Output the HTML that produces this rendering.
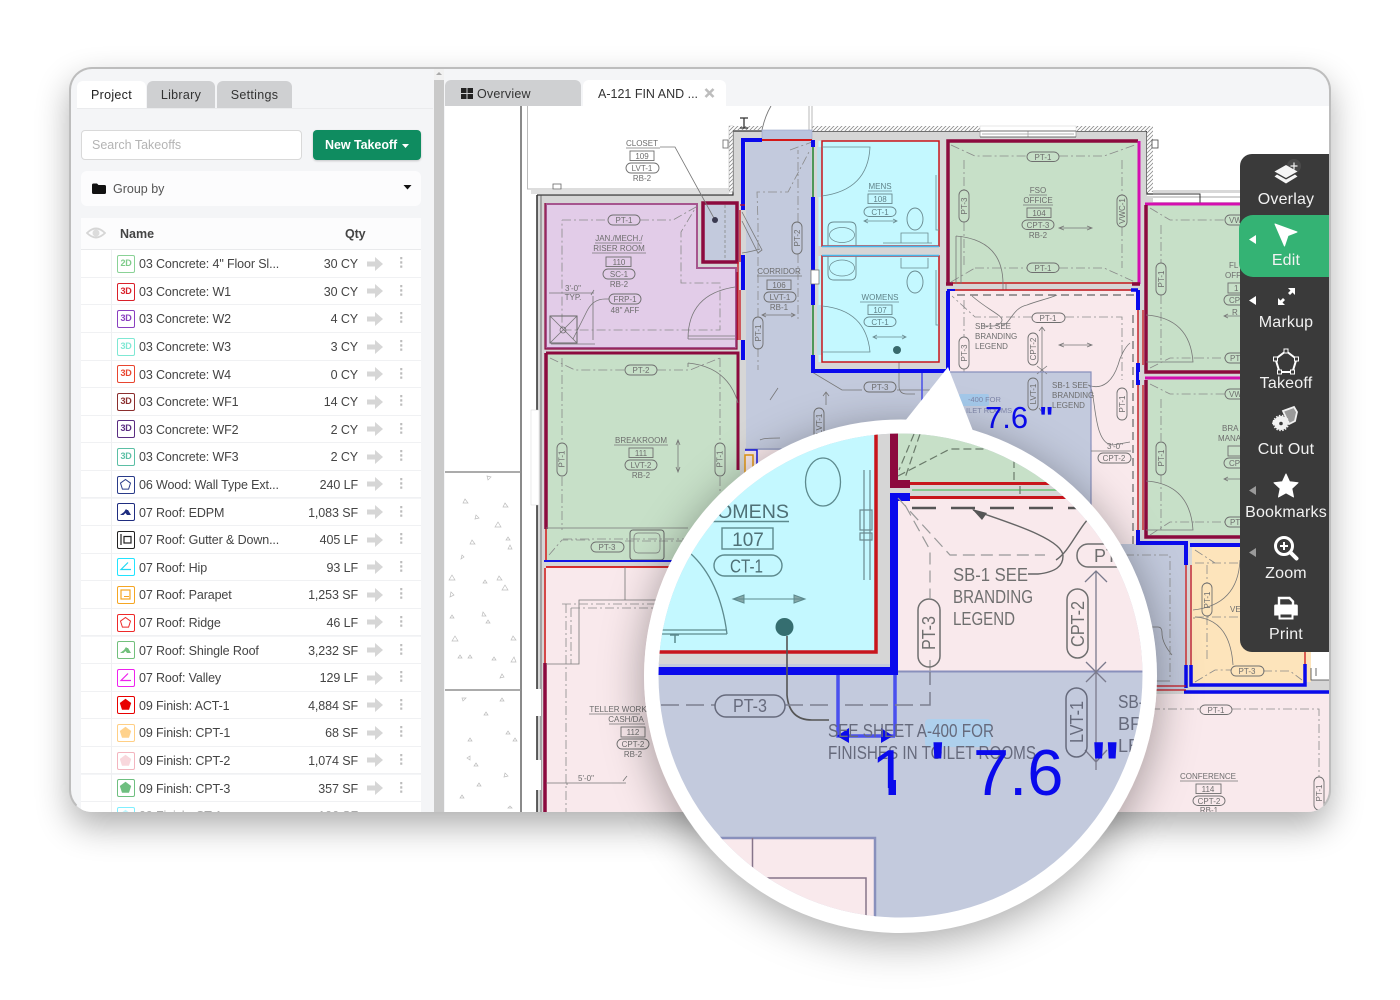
<!DOCTYPE html>
<html lang="en"><head><meta charset="utf-8"><title>Takeoff</title>
<style>
html,body{margin:0;padding:0;background:#fff;width:1400px;height:1000px;overflow:hidden}
*{box-sizing:border-box}
body{font-family:"Liberation Sans",sans-serif;position:relative}
.a{position:absolute}
#win{position:absolute;left:70px;top:68px;width:1260px;height:744px;border-radius:22px;overflow:hidden;background:#f4f5f7;box-shadow:0 14px 34px rgba(0,0,0,.32)}
#p{position:absolute;left:-70px;top:-68px;width:1400px;height:1000px}
#edge{position:absolute;left:69px;top:67px;width:1262px;height:746px;border-radius:23px;border:2px solid #bdbdbd;border-bottom-color:transparent;pointer-events:none}
.tab{position:absolute;border-radius:6px 6px 0 0;background:#cfd0d2;font-size:12.5px;color:#333;text-align:center;line-height:28px;height:27px;letter-spacing:.3px}
.r{position:absolute;left:81px;width:340px;height:27.6px;background:#fff;border-bottom:1px solid #f0f1f3;font-size:12.5px;color:#444}
.b{position:absolute;left:36px;top:4.8px;width:18px;height:18px;border:1.5px solid;border-radius:2px;font-size:9px;font-weight:bold;text-align:center;line-height:15px;letter-spacing:-.2px}
.b svg{position:absolute;left:0;top:0}
.n{position:absolute;left:58px;top:0;line-height:28.6px;white-space:nowrap;letter-spacing:-.12px}
.q{position:absolute;right:63px;top:0;line-height:28.6px;white-space:nowrap;letter-spacing:-.1px}
.ar{position:absolute;left:286px;top:6.5px}
.k{position:absolute;left:319px;top:7px}
svg text{font-family:"Liberation Sans",sans-serif}
.t{font-size:8px;fill:#6d6d6d;text-anchor:middle}
.s{fill:none;stroke:#777;stroke-width:.8}
.d{fill:none;stroke:#8a8a8a;stroke-width:.8;stroke-dasharray:9 3 2 3}
.pl{fill:none;stroke:#6f6f6f;stroke-width:.9}
.tl{position:absolute;left:1241px;width:90px;text-align:center;color:#f2f2f2;font-size:16px;line-height:18px;letter-spacing:.2px}
</style></head><body>
<div id="win"><div id="p">

<!-- left panel -->
<div class="a" style="left:70px;top:68px;width:364px;height:744px;background:#f4f5f7"></div>
<div class="tab" style="left:77px;top:81px;width:69px;background:#fff;color:#222">Project</div>
<div class="tab" style="left:147px;top:81px;width:68px">Library</div>
<div class="tab" style="left:217px;top:81px;width:75px">Settings</div>
<div class="a" style="left:77px;top:108px;width:356px;height:1px;background:#eaebed"></div>
<div class="a" style="left:81px;top:130px;width:221px;height:30px;background:#fff;border:1px solid #d9d9d9;border-radius:4px;font-size:12.5px;color:#b4b4b4;line-height:28px;padding-left:10px">Search Takeoffs</div>
<div class="a" style="left:313px;top:130px;width:108px;height:30px;background:#0f8c60;border-radius:4px;color:#fff;font-size:12.5px;font-weight:bold;line-height:30px;padding-left:12px;box-shadow:0 1px 2px rgba(0,0,0,.2);letter-spacing:-.05px">New Takeoff</div>
<svg class="a" style="left:401px;top:143px" width="9" height="6"><path d="M1 1h7L4.500 5z" fill="#fff"/></svg>
<div class="a" style="left:81px;top:171px;width:340px;height:35px;background:#fcfcfd;border-radius:6px;font-size:12.5px;color:#555;line-height:36px;padding-left:32px">Group by</div>
<svg class="a" style="left:92px;top:183px" width="14" height="11"><path d="M0 2q0-1.500 1.500-1.500h3.500l1.500 1.500h6q1.500 0 1.500 1.500v6q0 1.500-1.500 1.500h-11q-1.500 0-1.500-1.500z" fill="#111"/></svg>
<svg class="a" style="left:403px;top:184px" width="10" height="7"><path d="M.5 1h8L4.500 5.500z" fill="#111"/></svg>
<div class="a" style="left:81px;top:218px;width:340px;height:32px;background:#fcfcfd;border-bottom:1px solid #e9eaec"></div>
<svg class="a" style="left:86px;top:226px" width="20" height="14"><path d="M1 7q9-9 18 0q-9 9-18 0z" fill="none" stroke="#d6d6d6" stroke-width="1.800"/><circle cx="10" cy="7" r="3.500" fill="#dcdcdc"/></svg>
<div class="a" style="left:120px;top:226px;font-size:12.5px;font-weight:bold;color:#444;line-height:16px">Name</div>
<div class="a" style="left:345px;top:226px;font-size:12.5px;font-weight:bold;color:#444;line-height:16px;letter-spacing:-.1px">Qty</div>

<div class="r" style="top:250.200px"><div class="b" style="color:#7ecb8a;border-color:#8ad296">2D</div><div class="n">03 Concrete: 4" Floor Sl...</div><div class="q">30 CY</div><svg class="ar" width="17" height="14"><path d="M0 4.500h8V0l8 7-8 7V9.500H0z" fill="#d6d6d6"/></svg><svg class="k" width="3" height="11"><path d="M.2 0h2.100v2.300H.2zM.2 4.300h2.100v2.300H.2zM.2 8.500h2.100v2.300H.2z" fill="#bcbcbc"/></svg></div>
<div class="r" style="top:277.800px"><div class="b" style="color:#d9202a;border-color:#d9202a">3D</div><div class="n">03 Concrete: W1</div><div class="q">30 CY</div><svg class="ar" width="17" height="14"><path d="M0 4.500h8V0l8 7-8 7V9.500H0z" fill="#d6d6d6"/></svg><svg class="k" width="3" height="11"><path d="M.2 0h2.100v2.300H.2zM.2 4.300h2.100v2.300H.2zM.2 8.500h2.100v2.300H.2z" fill="#bcbcbc"/></svg></div>
<div class="r" style="top:305.400px"><div class="b" style="color:#8a3fc0;border-color:#8a3fc0">3D</div><div class="n">03 Concrete: W2</div><div class="q">4 CY</div><svg class="ar" width="17" height="14"><path d="M0 4.500h8V0l8 7-8 7V9.500H0z" fill="#d6d6d6"/></svg><svg class="k" width="3" height="11"><path d="M.2 0h2.100v2.300H.2zM.2 4.300h2.100v2.300H.2zM.2 8.500h2.100v2.300H.2z" fill="#bcbcbc"/></svg></div>
<div class="r" style="top:333px"><div class="b" style="color:#7fe8d4;border-color:#7fe8d4">3D</div><div class="n">03 Concrete: W3</div><div class="q">3 CY</div><svg class="ar" width="17" height="14"><path d="M0 4.500h8V0l8 7-8 7V9.500H0z" fill="#d6d6d6"/></svg><svg class="k" width="3" height="11"><path d="M.2 0h2.100v2.300H.2zM.2 4.300h2.100v2.300H.2zM.2 8.500h2.100v2.300H.2z" fill="#bcbcbc"/></svg></div>
<div class="r" style="top:360.500px"><div class="b" style="color:#e8452f;border-color:#e8452f">3D</div><div class="n">03 Concrete: W4</div><div class="q">0 CY</div><svg class="ar" width="17" height="14"><path d="M0 4.500h8V0l8 7-8 7V9.500H0z" fill="#d6d6d6"/></svg><svg class="k" width="3" height="11"><path d="M.2 0h2.100v2.300H.2zM.2 4.300h2.100v2.300H.2zM.2 8.500h2.100v2.300H.2z" fill="#bcbcbc"/></svg></div>
<div class="r" style="top:388.100px"><div class="b" style="color:#8b2e2e;border-color:#8b2e2e">3D</div><div class="n">03 Concrete: WF1</div><div class="q">14 CY</div><svg class="ar" width="17" height="14"><path d="M0 4.500h8V0l8 7-8 7V9.500H0z" fill="#d6d6d6"/></svg><svg class="k" width="3" height="11"><path d="M.2 0h2.100v2.300H.2zM.2 4.300h2.100v2.300H.2zM.2 8.500h2.100v2.300H.2z" fill="#bcbcbc"/></svg></div>
<div class="r" style="top:415.700px"><div class="b" style="color:#5a2d82;border-color:#5a2d82">3D</div><div class="n">03 Concrete: WF2</div><div class="q">2 CY</div><svg class="ar" width="17" height="14"><path d="M0 4.500h8V0l8 7-8 7V9.500H0z" fill="#d6d6d6"/></svg><svg class="k" width="3" height="11"><path d="M.2 0h2.100v2.300H.2zM.2 4.300h2.100v2.300H.2zM.2 8.500h2.100v2.300H.2z" fill="#bcbcbc"/></svg></div>
<div class="r" style="top:443.300px"><div class="b" style="color:#5bbfa5;border-color:#5bbfa5">3D</div><div class="n">03 Concrete: WF3</div><div class="q">2 CY</div><svg class="ar" width="17" height="14"><path d="M0 4.500h8V0l8 7-8 7V9.500H0z" fill="#d6d6d6"/></svg><svg class="k" width="3" height="11"><path d="M.2 0h2.100v2.300H.2zM.2 4.300h2.100v2.300H.2zM.2 8.500h2.100v2.300H.2z" fill="#bcbcbc"/></svg></div>
<div class="r" style="top:470.900px"><div class="b" style="border-color:#2a3c8a"><svg width="15" height="15"><path d="M7.500 2.500l5 3.600-1.900 6H4.400l-1.900-6z" fill="none" stroke="#2a3c8a" stroke-width="1"/></svg></div><div class="n">06 Wood: Wall Type Ext...</div><div class="q">240 LF</div><svg class="ar" width="17" height="14"><path d="M0 4.500h8V0l8 7-8 7V9.500H0z" fill="#d6d6d6"/></svg><svg class="k" width="3" height="11"><path d="M.2 0h2.100v2.300H.2zM.2 4.300h2.100v2.300H.2zM.2 8.500h2.100v2.300H.2z" fill="#bcbcbc"/></svg></div>
<div class="r" style="top:498.500px"><div class="b" style="border-color:#1f2d80"><svg width="15" height="15"><path d="M2 11l4-3 2-3 1 1 1 0 3 5H9L7.500 9 5.500 11z" fill="#1f2d80"/></svg></div><div class="n">07 Roof: EDPM</div><div class="q">1,083 SF</div><svg class="ar" width="17" height="14"><path d="M0 4.500h8V0l8 7-8 7V9.500H0z" fill="#d6d6d6"/></svg><svg class="k" width="3" height="11"><path d="M.2 0h2.100v2.300H.2zM.2 4.300h2.100v2.300H.2zM.2 8.500h2.100v2.300H.2z" fill="#bcbcbc"/></svg></div>
<div class="r" style="top:526.100px"><div class="b" style="border-color:#222"><svg width="15" height="15"><path d="M3 2v11" stroke="#222" stroke-width="1.200"/><rect x="6" y="4.500" width="7" height="6.500" fill="none" stroke="#222" stroke-width="1.200"/></svg></div><div class="n">07 Roof: Gutter &amp; Down...</div><div class="q">405 LF</div><svg class="ar" width="17" height="14"><path d="M0 4.500h8V0l8 7-8 7V9.500H0z" fill="#d6d6d6"/></svg><svg class="k" width="3" height="11"><path d="M.2 0h2.100v2.300H.2zM.2 4.300h2.100v2.300H.2zM.2 8.500h2.100v2.300H.2z" fill="#bcbcbc"/></svg></div>
<div class="r" style="top:553.700px"><div class="b" style="border-color:#22e4ff"><svg width="15" height="15"><path d="M10 3.500L3 10.500h10" fill="none" stroke="#22d8f4" stroke-width="1.200"/></svg></div><div class="n">07 Roof: Hip</div><div class="q">93 LF</div><svg class="ar" width="17" height="14"><path d="M0 4.500h8V0l8 7-8 7V9.500H0z" fill="#d6d6d6"/></svg><svg class="k" width="3" height="11"><path d="M.2 0h2.100v2.300H.2zM.2 4.300h2.100v2.300H.2zM.2 8.500h2.100v2.300H.2z" fill="#bcbcbc"/></svg></div>
<div class="r" style="top:581.300px"><div class="b" style="border-color:#f5a623"><svg width="15" height="15"><rect x="3" y="3" width="9" height="9" fill="none" stroke="#f5a623" stroke-width="1.200"/><path d="M6 9.500h5" stroke="#f5a623"/></svg></div><div class="n">07 Roof: Parapet</div><div class="q">1,253 SF</div><svg class="ar" width="17" height="14"><path d="M0 4.500h8V0l8 7-8 7V9.500H0z" fill="#d6d6d6"/></svg><svg class="k" width="3" height="11"><path d="M.2 0h2.100v2.300H.2zM.2 4.300h2.100v2.300H.2zM.2 8.500h2.100v2.300H.2z" fill="#bcbcbc"/></svg></div>
<div class="r" style="top:608.900px"><div class="b" style="border-color:#ee2a2a"><svg width="15" height="15"><path d="M7.500 2.500l5 3.600-1.900 6H4.400l-1.900-6z" fill="none" stroke="#ee2a2a" stroke-width="1"/></svg></div><div class="n">07 Roof: Ridge</div><div class="q">46 LF</div><svg class="ar" width="17" height="14"><path d="M0 4.500h8V0l8 7-8 7V9.500H0z" fill="#d6d6d6"/></svg><svg class="k" width="3" height="11"><path d="M.2 0h2.100v2.300H.2zM.2 4.300h2.100v2.300H.2zM.2 8.500h2.100v2.300H.2z" fill="#bcbcbc"/></svg></div>
<div class="r" style="top:636.500px"><div class="b" style="border-color:#72c07c"><svg width="15" height="15"><path d="M2 11l4-3 2-3 1 1 1 0 3 5H9L7.500 9 5.500 11z" fill="#72c07c"/></svg></div><div class="n">07 Roof: Shingle Roof</div><div class="q">3,232 SF</div><svg class="ar" width="17" height="14"><path d="M0 4.500h8V0l8 7-8 7V9.500H0z" fill="#d6d6d6"/></svg><svg class="k" width="3" height="11"><path d="M.2 0h2.100v2.300H.2zM.2 4.300h2.100v2.300H.2zM.2 8.500h2.100v2.300H.2z" fill="#bcbcbc"/></svg></div>
<div class="r" style="top:664.100px"><div class="b" style="border-color:#ee22ee"><svg width="15" height="15"><path d="M10 3.500L3 10.500h10" fill="none" stroke="#ee22ee" stroke-width="1.200"/></svg></div><div class="n">07 Roof: Valley</div><div class="q">129 LF</div><svg class="ar" width="17" height="14"><path d="M0 4.500h8V0l8 7-8 7V9.500H0z" fill="#d6d6d6"/></svg><svg class="k" width="3" height="11"><path d="M.2 0h2.100v2.300H.2zM.2 4.300h2.100v2.300H.2zM.2 8.500h2.100v2.300H.2z" fill="#bcbcbc"/></svg></div>
<div class="r" style="top:691.700px"><div class="b" style="border-color:#e80000"><svg width="15" height="15"><path d="M7.500 1.800l5.700 4.200-2.200 6.800H4l-2.200-6.800z" fill="#e80000"/></svg></div><div class="n">09 Finish: ACT-1</div><div class="q">4,884 SF</div><svg class="ar" width="17" height="14"><path d="M0 4.500h8V0l8 7-8 7V9.500H0z" fill="#d6d6d6"/></svg><svg class="k" width="3" height="11"><path d="M.2 0h2.100v2.300H.2zM.2 4.300h2.100v2.300H.2zM.2 8.500h2.100v2.300H.2z" fill="#bcbcbc"/></svg></div>
<div class="r" style="top:719.300px"><div class="b" style="border-color:#ffcf85"><svg width="15" height="15"><path d="M7.500 1.800l5.700 4.200-2.200 6.800H4l-2.200-6.800z" fill="#ffd28c"/></svg></div><div class="n">09 Finish: CPT-1</div><div class="q">68 SF</div><svg class="ar" width="17" height="14"><path d="M0 4.500h8V0l8 7-8 7V9.500H0z" fill="#d6d6d6"/></svg><svg class="k" width="3" height="11"><path d="M.2 0h2.100v2.300H.2zM.2 4.300h2.100v2.300H.2zM.2 8.500h2.100v2.300H.2z" fill="#bcbcbc"/></svg></div>
<div class="r" style="top:746.900px"><div class="b" style="border-color:#f3b5bf"><svg width="15" height="15"><path d="M7.500 1.800l5.700 4.200-2.200 6.800H4l-2.200-6.800z" fill="#f8d7dc"/></svg></div><div class="n">09 Finish: CPT-2</div><div class="q">1,074 SF</div><svg class="ar" width="17" height="14"><path d="M0 4.500h8V0l8 7-8 7V9.500H0z" fill="#d6d6d6"/></svg><svg class="k" width="3" height="11"><path d="M.2 0h2.100v2.300H.2zM.2 4.300h2.100v2.300H.2zM.2 8.500h2.100v2.300H.2z" fill="#bcbcbc"/></svg></div>
<div class="r" style="top:774.500px"><div class="b" style="border-color:#6fbf80"><svg width="15" height="15"><path d="M7.500 1.800l5.700 4.200-2.200 6.800H4l-2.200-6.800z" fill="#6fbf80"/></svg></div><div class="n">09 Finish: CPT-3</div><div class="q">357 SF</div><svg class="ar" width="17" height="14"><path d="M0 4.500h8V0l8 7-8 7V9.500H0z" fill="#d6d6d6"/></svg><svg class="k" width="3" height="11"><path d="M.2 0h2.100v2.300H.2zM.2 4.300h2.100v2.300H.2zM.2 8.500h2.100v2.300H.2z" fill="#bcbcbc"/></svg></div>
<div class="r" style="top:802.100px"><div class="b" style="border-color:#7fefff"><svg width="15" height="15"><path d="M7.500 1.800l5.700 4.200-2.200 6.800H4l-2.200-6.800z" fill="#bff7ff"/></svg></div><div class="n" style="color:#aaa">09 Finish: CT-1</div><div class="q" style="color:#aaa">106 SF</div></div>
<div class="a" style="left:111px;top:250px;width:1px;height:562px;background:#eeeff1"></div>

<!-- scroll divider -->
<div class="a" style="left:434px;top:80px;width:10px;height:732px;background:#c9c9c9"></div>
<div class="a" style="left:434px;top:68px;width:10px;height:12px;background:#f1f1f1"></div>
<svg class="a" style="left:436px;top:71px" width="6" height="4"><path d="M0 4l3-3 3 3z" fill="#aaa"/></svg>

<!-- top tabs -->
<div class="a" style="left:444px;top:68px;width:886px;height:38px;background:#f4f5f7"></div>
<div class="a" style="left:445px;top:80px;width:136px;height:26px;background:#cfd0d2;border-radius:6px 6px 0 0"></div>
<svg class="a" style="left:460px;top:87px" width="14" height="13"><path d="M1 1h5.500v5H1zM7.500 1H13v5H7.500zM1 7h5.500v5H1zM7.500 7H13v5H7.500z" fill="#222"/></svg>
<div class="a" style="left:477px;top:86px;font-size:12.5px;line-height:16px;color:#333;letter-spacing:.2px">Overview</div>
<div class="a" style="left:583px;top:80px;width:143px;height:26px;background:#fff;border-radius:6px 6px 0 0;font-size:12.5px;line-height:28px;color:#333;padding-left:15px">A-121 FIN AND ...</div>
<svg class="a" style="left:704px;top:88px" width="11" height="10"><path d="M1.500 1l8 8M9.500 1l-8 8" stroke="#bdbdbd" stroke-width="2.600"/></svg>

<!-- plan -->
<svg class="a" style="left:445px;top:106px" width="885" height="706" viewBox="445 106 885 706">
<defs>
<pattern id="h" width="4" height="4" patternUnits="userSpaceOnUse"><rect width="4" height="4" fill="#fff"/><path d="M-1 1l2-2M0 4l4-4M3 5l2-2" stroke="#8d8d8d" stroke-width=".8"/></pattern>
</defs>
<rect x="445" y="106" width="885" height="706" fill="#fff"/>
<!-- site lines -->
<path d="M521 106V812" stroke="#8a8a8a" stroke-width="2"/>
<path d="M445 472H521M445 690H521" stroke="#8f8f8f" stroke-width="1.500"/>
<path d="M527.500 106V189H729" fill="none" stroke="#bbb" stroke-width="1"/>
<g fill="none" stroke="#bdbdbd" stroke-width=".7"><path d="M487 476l4 1-3 3zM465 499l3 4h-5zM505 503l3 4h-5zM476 515l3 3-4 1zM498 522l3 5h-6zM508 537l2 3h-4zM472 540l3 4h-5zM510 545l2 4h-4zM462 555l2 2-3 2zM452 575l3 5h-6zM485 580l2 3h-4zM499 576l3 4h-5zM505 585l3 5h-6zM451 592l3 3-4 2zM452 615l2 3h-4zM483 612l3 4-4 0zM488 620l2 3h-4zM455 636l3 5h-6zM460 655l2 3h-4zM470 655l2 3h-4zM494 657l2 3h-4zM513 636l3 4h-5zM514 657l2 5h-5zM502 674l2 3-4 1zM462 698l4 0-3 3zM502 698l2 3h-4zM486 712l2 3-4 0zM470 738l2 3h-4zM508 731l2 3h-4zM470 756l-3 2 3 2zM476 763l2 3h-4zM515 738l2 3h-4zM479 783l2 3h-4zM505 773l3 3-4 1zM462 795l2 3h-4zM510 806l2 2h-4z"/></g>

<!-- building mass -->
<path d="M733 131H1147V196H1330V812H537V195H733Z" fill="#d6d6d6"/>
<path d="M537 195H733V130M733 131H980M1076 131H1147V194H1240" fill="none" stroke="#333" stroke-width="1.200"/>
<path d="M537 195V812" stroke="#2f2f2f" stroke-width="1.500"/>
<path d="M541 195V812" stroke="#444" stroke-width=".7"/>
<!-- hatch -->
<rect x="729" y="126" width="4" height="66" fill="url(#h)" stroke="#aaa" stroke-width=".5"/>
<rect x="531" y="190" width="198" height="4" fill="#e0e0e0"/>
<rect x="729" y="126" width="33" height="4" fill="url(#h)"/>
<rect x="812" y="126" width="168" height="5" fill="url(#h)"/>
<rect x="1076" y="126" width="77" height="5" fill="url(#h)"/>
<rect x="1147" y="126" width="6" height="66" fill="url(#h)"/>
<rect x="1153" y="190" width="87" height="3" fill="#d8d8d8"/>
<rect x="980" y="126" width="96" height="11" fill="#fff" stroke="#d0d0d0" stroke-width=".5"/>
<path d="M980 131V137M1076 131V137M982 134H1074M1028 131V137" stroke="#999" stroke-width=".7"/>
<path d="M980 131H1076M980 137H1076" stroke="#444" stroke-width=".8"/>
<rect x="1153" y="193" width="87" height="9" fill="#fff"/>
<path d="M1200 194V202M1153 197H1240" stroke="#888" stroke-width=".7"/>
<path d="M1147 194H1200V204" fill="none" stroke="#333" stroke-width="1"/>
<!-- door above corridor -->
<path d="M762 130q3-14 9-24" fill="none" stroke="#777" stroke-width=".9"/>
<path d="M809 130V106M812 130V106" fill="none" stroke="#a8a8a8" stroke-width=".8"/>
<path d="M740 118h8M744 118v10M740 128h8" stroke="#333" stroke-width="1.300"/>
<rect x="723" y="140" width="5" height="8" fill="#fff" stroke="#666" stroke-width=".8"/>
<rect x="553" y="184" width="8" height="5" fill="#fff" stroke="#666" stroke-width=".8"/>
<rect x="1152" y="140" width="6" height="8" fill="#fff" stroke="#444" stroke-width=".8"/>
<!-- side windows -->
<rect x="531" y="410" width="8" height="95" fill="#fff" stroke="#ccc" stroke-width=".4"/>
<rect x="531" y="689" width="10" height="27" fill="#fff"/>
<rect x="531" y="760" width="10" height="30" fill="#fff"/>

<!-- corridor -->
<path d="M746 141H812V372H1091V544H1185V690H1100V812H746Z" fill="#c3cadd"/>
<rect x="762" y="130" width="50" height="10" fill="#b9c4de" stroke="#9aa5c8" stroke-width=".6"/>
<path d="M762 140H812" stroke="#d41818" stroke-width="2"/>

<!-- Jan room -->
<path d="M546 204H697V268H736V348H546Z" fill="#e2cce8" stroke="#a6558e" stroke-width="2"/>
<path d="M545 203V349H737V272" fill="none" stroke="#8c0a3e" stroke-width="1.200"/>
<path d="M703 203H737V262H703Z" fill="#c3cadd" stroke="#8c0a3e" stroke-width="3.500"/>
<path d="M725 205V260" stroke="#888" stroke-dasharray="3 2" stroke-width=".8"/>
<path d="M715 220L675 147H660" class="s"/><circle cx="715" cy="220" r="3" fill="#3a3a50"/>
<path d="M562 220H606M640 220H673L696 207L681 232V283H720V330H562V220" class="d"/>
<path d="M688 339q0-45 47-52M688 336H735M688 339H735" class="s"/>
<path d="M549 293H594M593 296V340M594 290l-3 5M551 344h44" class="s"/>
<rect x="550" y="316" width="27" height="27" fill="none" stroke="#666"/><path d="M550 316l27 27M577 316l-27 27" class="s"/><circle cx="563" cy="330" r="3" fill="none" stroke="#666" stroke-width=".7"/>
<path d="M609 299h-4q-12 0-18 12l-14 28" class="s"/>
<text class="t" x="642" y="146">CLOSET</text><path d="M626 148H660" class="s"/>
<rect x="630" y="151" width="24" height="9.500" class="pl"/><text class="t" x="642" y="159">109</text>
<rect x="626" y="163" width="33" height="10" rx="5" class="pl"/><text class="t" x="642" y="171">LVT-1</text>
<text class="t" x="642" y="181">RB-2</text>
<rect x="608" y="215" width="32" height="10" rx="5" class="pl"/><text class="t" x="624" y="223">PT-1</text>
<text class="t" x="619" y="241">JAN./MECH./</text><path d="M595 243H642M592 253H646" class="s"/><text class="t" x="619" y="251">RISER ROOM</text>
<rect x="606" y="257" width="25" height="9.500" class="pl"/><text class="t" x="619" y="265">110</text>
<rect x="603" y="269" width="32" height="10" rx="5" class="pl"/><text class="t" x="619" y="277">SC-1</text>
<text class="t" x="619" y="287">RB-2</text>
<text class="t" x="573" y="291">3'-0"</text><text class="t" x="573" y="300">TYP.</text>
<rect x="609" y="294" width="32" height="10" rx="5" class="pl"/><text class="t" x="625" y="302">FRP-1</text>
<text class="t" x="625" y="313">48" AFF</text>
<!-- closet door -->
<path d="M742 212l20 38-4 3-16-32M742 253q8-1 18-4" class="s"/>

<!-- breakroom -->
<rect x="546" y="353" width="194" height="208" fill="#c7e0c8"/>
<path d="M546 353H738V470" fill="none" stroke="#8c0a3e" stroke-width="3"/>
<path d="M546 353V529" stroke="#8c0a3e" stroke-width="3.500"/>
<path d="M546 529V560" stroke="#d41818" stroke-width="1.500"/>
<path d="M546 528H688" class="s"/>
<path d="M562 358V442M562 477V530M550 358L575 370H625M657 370H690L720 358M720 358V442M720 477V540M549 555L562 540H590M625 541H720M563 539H700" class="d"/>
<path d="M688 363q40 4 50 40M688 363V367" class="s"/>
<rect x="630" y="530" width="34" height="30" rx="3" fill="none" stroke="#666"/>
<rect x="634" y="533" width="26" height="20" rx="4" fill="none" stroke="#777" stroke-width=".7"/>
<path d="M544 561H700" stroke="#1414e6" stroke-width="2"/>
<rect x="625" y="365" width="32" height="10" rx="5" class="pl"/><text class="t" x="641" y="373">PT-2</text>
<text class="t" x="641" y="443">BREAKROOM</text><path d="M614 445H668" class="s"/>
<rect x="629" y="448" width="24" height="9.500" class="pl"/><text class="t" x="641" y="456">111</text>
<rect x="625" y="460" width="32" height="10" rx="5" class="pl"/><text class="t" x="641" y="468">LVT-2</text>
<text class="t" x="641" y="478">RB-2</text>
<path d="M678 440V472M676 445l2-5 2 5M676 467l2 5 2-5" class="s"/>
<rect x="557" y="443" width="10" height="33" rx="5" class="pl"/><text class="t" transform="rotate(-90 564.500 459)" x="564.500" y="459">PT-1</text>
<rect x="715" y="443" width="10" height="33" rx="5" class="pl"/><text class="t" transform="rotate(-90 722.500 459)" x="722.500" y="459">PT-1</text>
<rect x="591" y="542" width="33" height="10" rx="5" class="pl"/><text class="t" x="607" y="550">PT-3</text>

<!-- pink teller -->
<rect x="546" y="567" width="360" height="245" fill="#f9e9ec"/>
<rect x="745" y="450" width="160" height="120" fill="#f9e9ec"/>
<path d="M546 567H760" stroke="#d41818" stroke-width="1.800"/>
<path d="M545 568V664" stroke="#d41818" stroke-width="1.500"/>
<path d="M545 663V812" stroke="#8c0a3e" stroke-width="3.500"/>
<path d="M546 664H579V600H690M625 567V600M546 783H626M567 783V785M623 781l4-5" class="s"/>
<path d="M562 604H660M566 604V812M571 608H660M571 608V664" class="d"/>
<path d="M745 449H800" stroke="#8990bc" stroke-width="1"/>
<path d="M745 455H753V473H745z" fill="none" stroke="#e89a10" stroke-width="1.500"/>
<path d="M745 450H757V470" fill="none" stroke="#1414e6" stroke-width="1.500"/>
<text class="t" x="618" y="712">TELLER WORK</text><path d="M589 714H640M609 724H645" class="s"/>
<text class="t" x="626" y="722">CASH/DA</text>
<rect x="621" y="727" width="24" height="10" class="pl"/><text class="t" x="633" y="735">112</text>
<rect x="617" y="739" width="32" height="10" rx="5" class="pl"/><text class="t" x="633" y="747">CPT-2</text>
<text class="t" x="633" y="757">RB-2</text>
<text class="t" x="586" y="781">5'-0"</text>

<!-- corridor details -->
<path d="M758 317V222L757 192H788L810 150M798 222V150M798 254V320M758 348V370M790 150L812 142" class="d"/>
<path d="M760 440q3-2 20-2M770 400l8-12" class="s"/>
<text class="t" x="779" y="274">CORRIDOR</text><path d="M757 276H802" class="s"/>
<rect x="767" y="280" width="24" height="9.500" class="pl"/><text class="t" x="779" y="288">106</text>
<rect x="764" y="292" width="32" height="10" rx="5" class="pl"/><text class="t" x="780" y="300">LVT-1</text>
<text class="t" x="779" y="310">RB-1</text>
<path d="M762 315H795M766 313l-4 2 4 2M791 313l4 2-4 2" class="s"/>
<rect x="753" y="317" width="10" height="32" rx="5" class="pl"/><text class="t" transform="rotate(-90 761 333)" x="761" y="333">PT-1</text>
<rect x="792" y="222" width="10" height="32" rx="5" class="pl"/><text class="t" transform="rotate(-90 800 238)" x="800" y="238">PT-2</text>
<rect x="814" y="408" width="10" height="32" rx="5" class="pl"/><text class="t" transform="rotate(-90 822 424)" x="822" y="424">LVT-1</text>
<path d="M826 405V392M823 396l3-4 3 4M812 372l30 18H862M897 390H945V372M899 352V386q0 8 8 8h8" class="s"/>
<rect x="864" y="382" width="32" height="10" rx="5" class="pl"/><text class="t" x="880" y="390">PT-3</text>
<path d="M922 372V405M945 372V405" stroke="#4a50e8" stroke-width="1.500"/>
<rect x="959" y="394" width="30" height="12" rx="2" fill="#9cc8ee" opacity=".8"/>

<!-- restrooms -->
<rect x="817" y="141" width="122" height="221" fill="#c4f8ff"/>
<rect x="812" y="246" width="127" height="10" fill="#d6d6d6"/>
<path d="M813 141V372M817 141V362" stroke="#d6d6d6" stroke-width="3"/>
<rect x="817" y="147" width="5" height="50" fill="#b9e0ea"/>
<rect x="817" y="305" width="5" height="50" fill="#b9e0ea"/>
<rect x="822" y="141" width="117" height="105" fill="none" stroke="#c8151c" stroke-width="1.500"/>
<rect x="822" y="256" width="117" height="106" fill="none" stroke="#c8151c" stroke-width="1.500"/>
<rect x="822" y="246" width="117" height="10" fill="#d6d6d6"/>
<path d="M822 246.500H939M822 255.500H939" stroke="#47b5ea" stroke-width="1.500"/>
<path d="M813 147V197M813 305V355" stroke="#21832f" stroke-width="1.500"/>
<path d="M813 140V147M813 197V305M813 355V372M811 371H949M948 371V291M947 291H955" fill="none" stroke="#0a0aec" stroke-width="4"/>
<rect x="811" y="270" width="8" height="14" fill="#fff" stroke="#666" stroke-width=".7"/>
<path d="M743 210V140H762" fill="none" stroke="#0a0aec" stroke-width="4"/>
<path d="M743 255V290M743 340V360" stroke="#0a0aec" stroke-width="4"/>
<path d="M740 205H745M740 210V262M738 262V340M740 290V340" stroke="#c8151c" stroke-width="1.300" fill="none"/>
<path d="M822 147H870Q868 190 822 196" fill="none" stroke="#6a8a90" stroke-width=".8"/>
<path d="M822 306Q866 310 870 352H822" fill="none" stroke="#6a8a90" stroke-width=".8"/>
<path d="M828 246v-18q0-6 6-6h16q6 0 6 6v18M828 256v18q0 6 6 6h16q6 0 6-6v-18" fill="none" stroke="#6a8a90" stroke-width=".9"/>
<ellipse cx="842" cy="235" rx="12.500" ry="7.500" fill="none" stroke="#6a8a90" stroke-width=".7"/>
<ellipse cx="842" cy="268" rx="12.500" ry="8" fill="none" stroke="#6a8a90" stroke-width=".7"/>
<ellipse cx="915" cy="219" rx="8" ry="11" fill="none" stroke="#6a8a90" stroke-width=".9"/>
<ellipse cx="915" cy="282" rx="8" ry="11" fill="none" stroke="#6a8a90" stroke-width=".9"/>
<path d="M901 243V233h27V243M901 258V268h27V258M883 243H932M936 175V230h3M936 270V325h3" fill="none" stroke="#6a8a90" stroke-width=".8"/>
<text class="t" x="880" y="189" style="fill:#5f8288">MENS</text><path d="M868 191H892" stroke="#6a8a90" stroke-width=".8"/>
<rect x="868" y="194" width="24" height="9.500" fill="none" stroke="#6a8a90" stroke-width=".9"/><text class="t" x="880" y="202" style="fill:#5f8288">108</text>
<rect x="864" y="207" width="32" height="9.500" rx="5" fill="none" stroke="#6a8a90" stroke-width=".9"/><text class="t" x="880" y="215" style="fill:#5f8288">CT-1</text>
<path d="M864 221H897M868 219l-4 2 4 2M893 219l4 2-4 2" fill="none" stroke="#6a8a90" stroke-width=".8"/>
<text class="t" x="880" y="300" style="fill:#5f8288">WOMENS</text><path d="M860 302H899" stroke="#6a8a90" stroke-width=".8"/>
<rect x="868" y="305" width="24" height="9.500" fill="none" stroke="#6a8a90" stroke-width=".9"/><text class="t" x="880" y="313" style="fill:#5f8288">107</text>
<rect x="864" y="317" width="32" height="9.500" rx="5" fill="none" stroke="#6a8a90" stroke-width=".9"/><text class="t" x="880" y="325" style="fill:#5f8288">CT-1</text>
<path d="M873 337H906M877 335l-4 2 4 2M902 335l4 2-4 2" fill="none" stroke="#6a8a90" stroke-width=".8"/>
<circle cx="897" cy="350" r="4" fill="#37696c"/>

<!-- FSO -->
<rect x="948" y="141" width="191" height="143" fill="#c7e0c8"/>
<path d="M948 284V141H1138" fill="none" stroke="#8c0a3e" stroke-width="3.500"/>
<path d="M1139 141V284" stroke="#d40fb0" stroke-width="3"/>
<path d="M950 283H1138" stroke="#c8151c" stroke-width="1.400"/>
<path d="M946 284H953M1132 284H1140" stroke="#8c0a3e" stroke-width="3.500"/>
<path d="M951 145L975 156H1027M1059 156H1104L1135 145M964 160V190M964 222V265M1122 160V195M1122 227V268M975 268H1027M1059 268H1104L1135 282M951 282L975 268" class="d"/>
<path d="M956 236Q1003 240 1003 284M956 236V284M961 236V284" class="s"/>
<path d="M1003 284V290M1006 284V290" class="s"/>
<rect x="1027" y="152" width="32" height="9.500" rx="5" class="pl"/><text class="t" x="1043" y="160">PT-1</text>
<rect x="1027" y="263" width="32" height="9.500" rx="5" class="pl"/><text class="t" x="1043" y="271">PT-1</text>
<text class="t" x="1038" y="193">FSO</text><path d="M1029 195H1047M1023 205H1053" class="s"/>
<text class="t" x="1038" y="203">OFFICE</text>
<rect x="1027" y="208" width="24" height="9.500" class="pl"/><text class="t" x="1039" y="216">104</text>
<rect x="1022" y="220" width="32" height="9.500" rx="5" class="pl"/><text class="t" x="1038" y="228">CPT-3</text>
<text class="t" x="1038" y="238">RB-2</text>
<path d="M1059 228H1092M1064 226l-5 2 5 2M1087 226l5 2-5 2" class="s"/>
<rect x="959" y="190" width="10" height="32" rx="5" class="pl"/><text class="t" transform="rotate(-90 967 206)" x="967" y="206">PT-3</text>
<rect x="1117" y="195" width="10" height="32" rx="5" class="pl"/><text class="t" transform="rotate(-90 1125 211)" x="1125" y="211">VWC-1</text>

<!-- pink centre -->
<path d="M950 291H1138V544H1091V372H950Z" fill="#f9e9ec"/>
<path d="M955 290H1136" stroke="#c8151c" stroke-width="1.400"/>
<path d="M1138 290V310M1138 363V385" stroke="#0a0aec" stroke-width="4"/>
<path d="M1131 290H1138" stroke="#0a0aec" stroke-width="3.500"/>
<path d="M1138 310V363M1138 385V530" stroke="#c8151c" stroke-width="1.400"/>
<path d="M957 295H1135M1133 315V545" stroke="#666" stroke-width="1.200" stroke-dasharray="8 5"/>
<path d="M1032 317H975L952 296M964 300V337M964 369V372M1065 317H1122V380M1091 372H950" fill="none" stroke="#8a8a8a" stroke-width=".8" stroke-dasharray="9 3 2 3"/>
<path d="M982 326h12q8-2 8-6c0-5-14-10-30-24M1002 325c8 0 10-17 25-20 10-4 24-7 30-10M1088 385c15 6 25-5 30-20 2-8 7-18 12-22M1088 385c9 0 3 60 25 60l17-3" class="s"/>
<path d="M1042 327V412M1039 331l3-4 3 4M1039 408l3 4 3-4M1037 366l10 8M1047 366l-10 8" class="s"/>
<text x="975" y="329" style="font-size:8px;fill:#6d6d6d">SB-1 SEE</text>
<text x="975" y="339" style="font-size:8px;fill:#6d6d6d">BRANDING</text>
<text x="975" y="349" style="font-size:8px;fill:#6d6d6d">LEGEND</text>
<rect x="1032" y="313" width="33" height="9.500" rx="5" class="pl"/><text class="t" x="1048" y="321">PT-1</text>
<rect x="959" y="337" width="10" height="32" rx="5" class="pl"/><text class="t" transform="rotate(-90 967 353)" x="967" y="353">PT-3</text>
<rect x="1028" y="333" width="10" height="32" rx="5" class="pl"/><text class="t" transform="rotate(-90 1036 349)" x="1036" y="349">CPT-2</text>
<path d="M1059 345H1092M1064 343l-5 2 5 2M1087 343l5 2-5 2" class="s"/>
<path d="M950 372H1091V544" fill="none" stroke="#8990bc" stroke-width="1.200"/>
<rect x="1028" y="378" width="10" height="32" rx="5" class="pl"/><text class="t" transform="rotate(-90 1036 394)" x="1036" y="394">LVT-1</text>
<rect x="1117" y="388" width="10" height="32" rx="5" class="pl"/><text class="t" transform="rotate(-90 1125 404)" x="1125" y="404">PT-1</text>
<text x="1052" y="388" style="font-size:8px;fill:#6d6d6d">SB-1 SEE</text>
<text x="1052" y="398" style="font-size:8px;fill:#6d6d6d">BRANDING</text>
<text x="1052" y="408" style="font-size:8px;fill:#6d6d6d">LEGEND</text>
<text class="t" x="1115" y="449">3'-0"</text>
<rect x="1098" y="453" width="33" height="10" rx="5" class="pl"/><text class="t" x="1114" y="461">CPT-2</text>
<path d="M1091 451H1131" class="s"/>
<text x="968" y="402" style="font-size:7.500px;fill:#7f86a8">-400 FOR</text>
<text x="966" y="413" style="font-size:7.500px;fill:#7f86a8">ILET ROOMS</text>
<text x="985" y="428" style="font-size:31px;fill:#0a0aec">7.6</text>
<text x="1039" y="428" style="font-size:31px;font-weight:bold;fill:#0a0aec">"</text>

<!-- right rooms -->
<rect x="1145" y="204" width="100" height="170" fill="#c7e0c8"/>
<rect x="1145" y="379" width="100" height="158" fill="#c7e0c8"/>
<rect x="1139" y="372" width="8" height="8" fill="#d6d6d6"/>
<path d="M1145 204H1240" stroke="#d40fb0" stroke-width="3"/>
<path d="M1146 205V372H1240" fill="none" stroke="#8c0a3e" stroke-width="3.500"/>
<path d="M1145 378H1240" stroke="#d40fb0" stroke-width="3"/>
<path d="M1146 380V537H1240" fill="none" stroke="#8c0a3e" stroke-width="3.500"/>
<path d="M1143 310V365M1143 385V530" stroke="#c8151c" stroke-width="1.300"/>
<path d="M1150 208L1170 220H1225M1161 225V263M1161 295V360M1195 358H1225M1150 368L1170 358H1195M1150 384L1170 394H1225M1161 399V441M1161 475V530M1195 522H1225M1150 535L1170 522H1195" class="d"/>
<path d="M1146 315Q1190 318 1193 362H1146M1146 481Q1190 484 1193 530H1146" class="s"/>
<rect x="1156" y="263" width="10" height="32" rx="5" class="pl"/><text class="t" transform="rotate(-90 1164 279)" x="1164" y="279">PT-1</text>
<rect x="1156" y="442" width="10" height="33" rx="5" class="pl"/><text class="t" transform="rotate(-90 1164 458)" x="1164" y="458">PT-1</text>
<rect x="1225" y="215" width="30" height="10" rx="5" class="pl"/><text x="1229" y="223" style="font-size:8px;fill:#6d6d6d">VW</text>
<text x="1229" y="268" style="font-size:8px;fill:#6d6d6d">FL</text><text x="1225" y="278" style="font-size:8px;fill:#6d6d6d">OFF</text>
<rect x="1228" y="283" width="30" height="10" class="pl"/><text x="1234" y="291" style="font-size:8px;fill:#6d6d6d">1</text>
<rect x="1224" y="295" width="30" height="10" rx="5" class="pl"/><text x="1229" y="303" style="font-size:8px;fill:#6d6d6d">CP</text>
<text x="1232" y="315" style="font-size:8px;fill:#6d6d6d">R</text>
<path d="M1224 316H1240M1228 314l-4 2 4 2" class="s"/>
<rect x="1225" y="353" width="30" height="10" rx="5" class="pl"/><text x="1230" y="361" style="font-size:8px;fill:#6d6d6d">PT</text>
<rect x="1225" y="389" width="30" height="10" rx="5" class="pl"/><text x="1229" y="397" style="font-size:8px;fill:#6d6d6d">VW</text>
<text x="1222" y="431" style="font-size:8px;fill:#6d6d6d">BRA</text><text x="1218" y="441" style="font-size:8px;fill:#6d6d6d">MANA</text>
<rect x="1228" y="446" width="30" height="10" class="pl"/>
<rect x="1224" y="458" width="30" height="10" rx="5" class="pl"/><text x="1229" y="466" style="font-size:8px;fill:#6d6d6d">CP</text>
<path d="M1224 479H1240M1228 477l-4 2 4 2" class="s"/>
<rect x="1225" y="517" width="30" height="10" rx="5" class="pl"/><text x="1230" y="525" style="font-size:8px;fill:#6d6d6d">PT</text>

<!-- orange room & lower -->
<rect x="1185" y="543" width="145" height="150" fill="#d6d6d6"/>
<rect x="1192" y="547" width="114" height="139" fill="#fde4bb"/>
<rect x="1306" y="650" width="5" height="32" fill="#fde4bb"/>
<rect x="1311" y="650" width="19" height="30" fill="#fff"/>
<path d="M1311 668V680H1330M1316 668V676" fill="none" stroke="#444" stroke-width=".8"/>
<path d="M1138 530V543H1186V565M1190 545H1240" fill="none" stroke="#0a0aec" stroke-width="4"/>
<path d="M1186 665V688M1191 665V685H1305V664" fill="none" stroke="#0a0aec" stroke-width="3.500"/>
<path d="M1184 692H1330" stroke="#0a0aec" stroke-width="3.500"/>
<path d="M1186 565V665M1191 565V665M1305 664V552" stroke="#c8151c" stroke-width="1.300"/>
<path d="M1100 686H1186M1100 690H1186" stroke="#c8151c" stroke-width="1.300"/>
<path d="M1195 563H1240M1195 617H1240M1207 565V583M1207 616V660M1195 550L1215 563M1195 682L1215 670H1231M1263 671H1290L1302 680" class="d"/>
<path d="M1195 617q35 2 38 48M1195 618h-2M1240 560Q1238 605 1193 610" class="s"/>
<rect x="1202" y="583" width="10" height="33" rx="5" class="pl"/><text class="t" transform="rotate(-90 1210 600)" x="1210" y="600">PT-1</text>
<rect x="1231" y="666" width="33" height="10" rx="5" class="pl"/><text class="t" x="1247" y="674">PT-3</text>
<text x="1230" y="612" style="font-size:8px;fill:#6d6d6d">VE</text>
<path d="M1172 655q-10-12-10-22 0-6-4-6h-8M1170 681H1155" class="s"/>
<path d="M1108 555H1170V680" class="d"/>

<!-- conference -->
<rect x="1100" y="694" width="230" height="118" fill="#f9e9ec"/>
<path d="M1100 709H1200M1232 709H1319V777" class="d"/>
<rect x="1200" y="705" width="32" height="9.500" rx="5" class="pl"/><text class="t" x="1216" y="713">PT-1</text>
<text class="t" x="1208" y="779">CONFERENCE</text><path d="M1180 781H1238" class="s"/>
<rect x="1196" y="784" width="25" height="9.500" class="pl"/><text class="t" x="1208" y="792">114</text>
<rect x="1193" y="796" width="32" height="9.500" rx="5" class="pl"/><text class="t" x="1209" y="804">CPT-2</text>
<text class="t" x="1209" y="813">RB-1</text>
<rect x="1314" y="777" width="10" height="33" rx="5" class="pl"/><text class="t" transform="rotate(-90 1322 793)" x="1322" y="793">PT-1</text>
</svg>

<!-- toolbar -->
<div class="a" style="left:1240px;top:154px;width:90px;height:498px;background:#3a3a3a;border-radius:12px 0 0 12px"></div>
<div class="a" style="left:1239px;top:215px;width:91px;height:62px;background:#34b374;border-radius:14px 0 0 14px"></div>
<svg class="a" style="left:1240px;top:154px" width="90" height="498" viewBox="1240 154 90 498">
<!-- overlay -->
<circle cx="1294" cy="166" r="7" fill="#4a4a4a"/>
<path d="M1294 162.500v7M1290.500 166h7" stroke="#f2f2f2" stroke-width="1.200"/>
<path d="M1286 165l11.500 6.500-11.500 6.500-11.500-6.500z" fill="#f6f6f6"/>
<path d="M1277 174.500l9 5 9-5 2.500 2-11.500 7-11.500-7z" fill="#f6f6f6"/>
<!-- edit -->
<path d="M1275 224l22 8-9 3.500-3.500 10.500z" fill="#fff" stroke="#fff" stroke-width="1" stroke-linejoin="round"/>
<path d="M1256 235v9l-7-4.500z" fill="#fff"/>
<!-- markup -->
<path d="M1256 296v9l-7-4.500z" fill="#fff"/>
<path d="M1278 305v-7l2.500 2.500 2.500-2.500 2 2-2.500 2.500 2.500 2.500zM1295 288v7l-2.500-2.500-2.500 2.500-2-2 2.500-2.500-2.500-2.500z" fill="#fff"/>
<!-- takeoff -->
<path d="M1286 351l10.500 8-4 13h-13l-4-13z" fill="none" stroke="#fff" stroke-width="2"/>
<g fill="#3a3a3a" stroke="#fff" stroke-width="1"><rect x="1284" y="349" width="4" height="4"/><rect x="1294.500" y="357" width="4" height="4"/><rect x="1290.500" y="370" width="4" height="4"/><rect x="1277.500" y="370" width="4" height="4"/><rect x="1273.500" y="357" width="4" height="4"/></g>
<!-- cut out -->
<path d="M1283 411l11-4 3 5-2 9-6 3z" fill="#9a9a9a" stroke="#f0f0f0" stroke-width="1.800"/>
<circle cx="1281" cy="423" r="6" fill="#f0f0f0" stroke="#f0f0f0" stroke-width="2"/>
<circle cx="1281" cy="423" r="7.500" fill="none" stroke="#f0f0f0" stroke-width="1.500" stroke-dasharray="1.500 1.500"/>
<path d="M1272 424l1-4h8l3 2-3 3z" fill="#f4f4f4"/>
<circle cx="1281" cy="423.500" r="1.800" fill="#3a3a3a"/>
<!-- star -->
<path d="M1286 474l3.600 7.800 8.400 1-6.200 5.700 1.700 8.500-7.500-4.200-7.500 4.200 1.700-8.500-6.200-5.700 8.400-1z" fill="#fff" stroke="#fff" stroke-linejoin="round"/>
<path d="M1256 486v9l-7-4.500z" fill="#9a9a9a"/>
<!-- zoom -->
<circle cx="1284" cy="546" r="8.500" fill="none" stroke="#fff" stroke-width="3"/>
<path d="M1284 542v8M1280 546h8" stroke="#fff" stroke-width="2"/>
<path d="M1290.500 552.500l6 6" stroke="#fff" stroke-width="4" stroke-linecap="round"/>
<path d="M1256 548v9l-7-4.500z" fill="#9a9a9a"/>
<!-- print -->
<path d="M1279 605v-7h10.500l3.500 3.500v3.500" fill="none" stroke="#fff" stroke-width="2.400"/>
<path d="M1275.500 605h21q.8 0 .8 1v9h-4v-3h-15v3h-3.600v-9q0-1 .8-1z" fill="#fff" stroke="#fff" stroke-width="1"/>
<rect x="1279.500" y="613.500" width="13" height="5" fill="none" stroke="#fff" stroke-width="2"/>
</svg>
<div class="tl" style="top:191px">Overlay</div>
<div class="tl" style="top:252px">Edit</div>
<div class="tl" style="top:314px">Markup</div>
<div class="tl" style="top:375px">Takeoff</div>
<div class="tl" style="top:441px">Cut Out</div>
<div class="tl" style="top:504px">Bookmarks</div>
<div class="tl" style="top:565px">Zoom</div>
<div class="tl" style="top:626px">Print</div>
</div></div>
<div id="edge"></div>

<!-- magnifier -->
<div class="a" style="left:644px;top:420px;width:513px;height:513px;border-radius:50%;box-shadow:0 8px 44px rgba(0,0,0,.36)"></div>
<svg class="a" style="left:0;top:0" width="1400" height="1000" viewBox="0 0 1400 1000">
<defs>
<clipPath id="lens"><circle cx="900.500" cy="675.500" r="242"/></clipPath>
<clipPath id="one"><rect x="860" y="730" width="60" height="58"/></clipPath>
</defs>
<path d="M948 367L905 421L975 436Z" fill="#fff"/>
<circle cx="900.500" cy="676" r="256.500" fill="#fff"/>
<g clip-path="url(#lens)">
<rect x="650" y="430" width="500" height="500" fill="#c3cadd"/>
<rect x="650" y="430" width="226" height="222" fill="#c4f8ff"/>
<path d="M876 430H892V664H650V652H876Z" fill="#d6d6d6"/>
<rect x="898" y="430" width="250" height="54" fill="#c7e0c8"/>
<rect x="890" y="484" width="260" height="14" fill="#d6d6d6"/>
<rect x="898" y="498" width="250" height="173" fill="#f9e9ec"/>
<path d="M910 483.500H1060M910 497.500H1070" stroke="#c8151c" stroke-width="3"/>
<path d="M912 490H1070" stroke="#86c98d" stroke-width="2"/>
<path d="M876 430V652H650" fill="none" stroke="#c8151c" stroke-width="3.500"/>
<path d="M894 430V484H910" fill="none" stroke="#8c0a3e" stroke-width="8"/>
<path d="M650 671H894V497H910" fill="none" stroke="#0a0aec" stroke-width="8"/>
<path d="M898 671.500H1150" stroke="#8990bc" stroke-width="2"/>
<!-- plumbing -->
<ellipse cx="823" cy="482" rx="17.500" ry="24" fill="none" stroke="#5d8a8e" stroke-width="1.300"/>
<path d="M864 470V580M870 470V580M860 510H872V530H860ZM860 533H872V540H860Z" fill="none" stroke="#6a8a90" stroke-width="1.200"/>
<!-- door -->
<path d="M690 553Q720 580 727 634M659 634H727M659 630H727" fill="none" stroke="#5d8a8e" stroke-width="1.300"/>
<path d="M670 635h9M675 635v8" stroke="#5d8a8e" stroke-width="1.500"/>
<text x="717" y="518" textLength="72" lengthAdjust="spacingAndGlyphs" style="font-size:19px;fill:#4f7076">OMENS</text>
<path d="M700 521.500H789" stroke="#5d8a8e" stroke-width="1.400"/>
<rect x="722" y="528" width="51" height="21" fill="none" stroke="#5d8a8e" stroke-width="1.400"/>
<text x="748" y="546" text-anchor="middle" style="font-size:19px;fill:#4f7076">107</text>
<rect x="714" y="555" width="68" height="21" rx="10.500" fill="none" stroke="#5d8a8e" stroke-width="1.400"/>
<text x="730" y="572.500" textLength="33" lengthAdjust="spacingAndGlyphs" style="font-size:18px;fill:#4f7076">CT-1</text>
<path d="M733 599H805M744 595l-11 4 11 4zM794 595l11 4-11 4z" fill="#86a8a8" stroke="#5d8a8e" stroke-width="1"/>
<circle cx="784.500" cy="627" r="9" fill="#356e70"/>
<path d="M787 636V695q2 25 25 25h17" fill="none" stroke="#555" stroke-width="1.600"/>
<!-- dashed/lines in green -->
<path d="M898 476L950 449H1015M1014 460V484M1020 486V498M914 434L899 470M920 434L905 478" fill="none" stroke="#6a7a6a" stroke-width="1.200" stroke-dasharray="8 4"/>
<!-- pink lines -->
<path d="M912 508H1160" stroke="#555" stroke-width="2.500" stroke-dasharray="24 15"/>
<path d="M898 498L950 555H1045M905 505L930 550V598M930 660V671" fill="none" stroke="#999" stroke-width="1.200" stroke-dasharray="12 6"/>
<path d="M1028 574H1038c18-2 25-8 25-18C1063 538 1000 520 973 510" fill="none" stroke="#666" stroke-width="1.400"/>
<path d="M972 509l15 4-5 7z" fill="#555"/>
<path d="M1056 560c15-10 20-30 40-50" fill="none" stroke="#666" stroke-width="1.400"/>
<g style="font-size:18px;fill:#6f6f6f">
<text x="953" y="581" textLength="75" lengthAdjust="spacingAndGlyphs">SB-1 SEE</text>
<text x="953" y="603" textLength="80" lengthAdjust="spacingAndGlyphs">BRANDING</text>
<text x="953" y="625" textLength="62" lengthAdjust="spacingAndGlyphs">LEGEND</text>
</g>
<rect x="1077" y="544" width="60" height="23" rx="11" fill="none" stroke="#6f6f6f" stroke-width="1.500"/>
<text x="1094" y="562" style="font-size:18px;fill:#6f6f6f">PT</text>
<rect x="918" y="599" width="22" height="68" rx="11" fill="none" stroke="#6f6f6f" stroke-width="1.500"/>
<text transform="rotate(-90 935 633)" x="935" y="633" text-anchor="middle" textLength="34" lengthAdjust="spacingAndGlyphs" style="font-size:18px;fill:#6f6f6f">PT-3</text>
<rect x="1067" y="589" width="21" height="69" rx="10.500" fill="none" stroke="#6f6f6f" stroke-width="1.500"/>
<text transform="rotate(-90 1084 624)" x="1084" y="624" text-anchor="middle" textLength="46" lengthAdjust="spacingAndGlyphs" style="font-size:18px;fill:#6f6f6f">CPT-2</text>
<path d="M1096 571V770M1085 582l11-11 11 11M1085 750l11 12 11-12M1086 662l20 20M1106 662l-20 20" fill="none" stroke="#7a7a8c" stroke-width="1.300"/>
<!-- below blue -->
<path d="M838 675V736H895M895 675V736" fill="none" stroke="#4a50ee" stroke-width="3.500"/>
<path d="M837 736l12-8v15zM893 736l-12-8v15z" fill="#0a0aec"/>
<rect x="925" y="719" width="66" height="28" rx="4" fill="#a6d3f2" opacity=".72"/>
<path d="M661 705H715M785 705H835M845 705H925M925 705H930V672" fill="none" stroke="#7c7f90" stroke-width="1.500" stroke-dasharray="18 7"/>
<rect x="715" y="695" width="70" height="22" rx="11" fill="none" stroke="#666a7c" stroke-width="1.500"/>
<text x="733" y="712" textLength="34" lengthAdjust="spacingAndGlyphs" style="font-size:18px;fill:#666a7c">PT-3</text>
<rect x="1066" y="688" width="21" height="69" rx="10.500" fill="none" stroke="#666a7c" stroke-width="1.500"/>
<text transform="rotate(-90 1083 722)" x="1083" y="722" text-anchor="middle" textLength="42" lengthAdjust="spacingAndGlyphs" style="font-size:18px;fill:#666a7c">LVT-1</text>
<g style="font-size:18px;fill:#666a7c">
<text x="828" y="737" textLength="166" lengthAdjust="spacingAndGlyphs">SEE SHEET A-400 FOR</text>
<text x="828" y="759" textLength="208" lengthAdjust="spacingAndGlyphs">FINISHES IN TOILET ROOMS</text>
<text x="1118" y="708" textLength="26" lengthAdjust="spacingAndGlyphs">SB-</text><text x="1118" y="730">BR</text><text x="1118" y="752">LE</text>
</g>
<g style="font-size:65px;fill:#0a0aec">
<text x="871.500" y="795" clip-path="url(#one)">1</text>
<rect x="888.500" y="780" width="7.500" height="15"/>
<text x="930" y="787" style="font-weight:bold">'</text>
<text x="973" y="795">7.6</text>
<text x="1090" y="787" style="font-weight:bold">"</text>
</g>
<!-- lower pink -->
<path d="M650 838H875V930H650Z" fill="#f9e9ec" stroke="#8990bc" stroke-width="2.500"/>
<path d="M752.500 838V880M752.500 878H866V930" fill="none" stroke="#86748a" stroke-width="1.500"/>
</g>
</svg>
</body></html>
